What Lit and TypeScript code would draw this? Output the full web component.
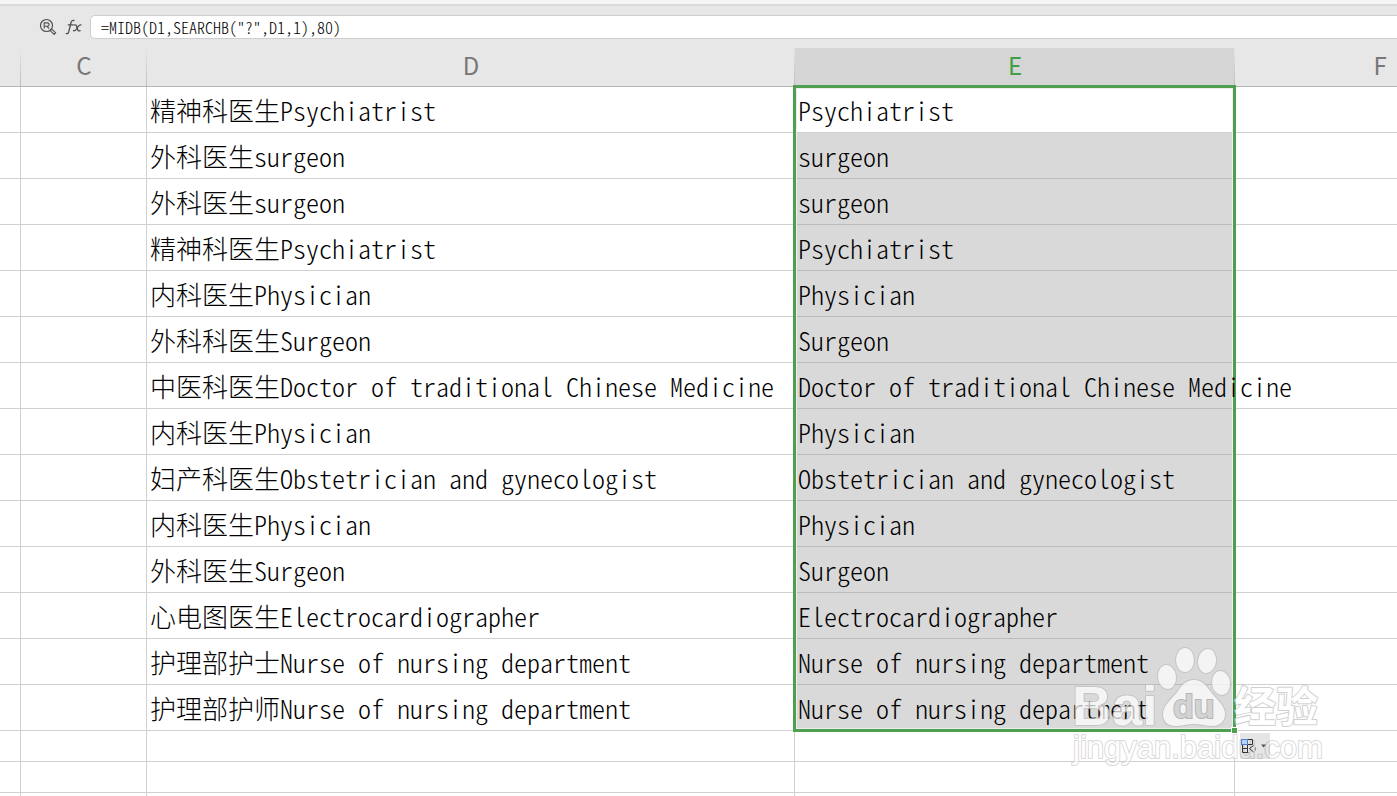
import { LitElement, html, css } from "lit";
import { customElement, state } from "lit/decorators.js";

interface Row {
  title: string;
  result: string;
}

const ROWS: Row[] = [
  { title: "精神科医生", result: "Psychiatrist" },
  { title: "外科医生", result: "surgeon" },
  { title: "外科医生", result: "surgeon" },
  { title: "精神科医生", result: "Psychiatrist" },
  { title: "内科医生", result: "Physician" },
  { title: "外科科医生", result: "Surgeon" },
  { title: "中医科医生", result: "Doctor of traditional Chinese Medicine" },
  { title: "内科医生", result: "Physician" },
  { title: "妇产科医生", result: "Obstetrician and gynecologist" },
  { title: "内科医生", result: "Physician" },
  { title: "外科医生", result: "Surgeon" },
  { title: "心电图医生", result: "Electrocardiographer" },
  { title: "护理部护士", result: "Nurse of nursing department" },
  { title: "护理部护师", result: "Nurse of nursing department" },
];

@customElement("formula-bar")
export class FormulaBar extends LitElement {
  @state() private formula = '=MIDB(D1,SEARCHB("?",D1,1),80)';

  static styles = css`
    :host {
      display: block;
      background: #e7e7e7;
    }
    .strip {
      height: 4px;
      background: #f5f5f5;
      border-bottom: 2px solid #dadada;
    }
    .bar {
      display: flex;
      align-items: center;
      height: 42px;
      padding-left: 38px;
      gap: 6px;
    }
    .tool {
      display: flex;
      align-items: center;
      justify-content: center;
      width: 20px;
      height: 24px;
      padding: 0;
      border: 0;
      background: none;
      color: #505050;
    }
    .box {
      flex: 1;
      display: flex;
      height: 24px;
      box-sizing: border-box;
      border: 1px solid #cfcfcf;
      border-right: 0;
      border-radius: 5px 0 0 5px;
      background: #fff;
      overflow: hidden;
    }
    .input {
      flex: 1;
      min-width: 0;
      border: 0;
      padding: 0 10px;
      outline: none;
      background: none;
      color: #000;
      font: 300 16px / 22px "Noto Sans CJK SC", sans-serif;
      font-feature-settings: "hwid";
    }
  `;

  render() {
    return html`
      <div class="strip"></div>
      <div class="bar">
        <button class="tool" aria-label="Find">
          <svg width="18" height="18" viewBox="0 0 18 18" fill="none" stroke="currentColor">
            <circle cx="7.5" cy="7.5" r="6" stroke-width="1.2" />
            <path d="M5.2 10.6V4.9H8.4a1.7 1.7 0 0 1 0 3.4H5.2M8 8.3l2.2 2.4" stroke-width="1.1" />
            <path d="M11.2 12.6l1.5-1.5 3.9 3.6-1.5 1.7z" stroke-width="1.1" />
          </svg>
        </button>
        <button class="tool" aria-label="Insert function">
          <svg width="18" height="18" viewBox="0 0 18 18" fill="none" stroke="currentColor" stroke-width="1.3" stroke-linecap="round">
            <path d="M1.2 15.6c1.6.5 2.3-.7 2.7-2.4L5.9 5c.4-1.9 1.3-2.9 3-2.5" />
            <path d="M3.3 6.8h5" />
            <path d="M9.3 7c1.3-.5 2 .2 2.4 1.5l.9 3c.4 1.3 1.2 1.8 2.5 1.1" />
            <path d="M16 6.9c-1.3-.2-1.9.4-2.8 1.6l-2.1 3c-.8 1.1-1.5 1.5-2.6 1.2" />
          </svg>
        </button>
        <div class="box">
          <input class="input" aria-label="Formula" spellcheck="false" .value=${this.formula} />
        </div>
      </div>
    `;
  }
}

@customElement("site-watermark")
export class SiteWatermark extends LitElement {
  static styles = css`
    :host {
      display: block;
      pointer-events: none;
    }
    .mark {
      display: block;
      opacity: 0.72;
    }
    .shape {
      fill: #fff;
      stroke: #bebebe;
      stroke-width: 2px;
      paint-order: stroke;
      stroke-linejoin: round;
    }
    .latin {
      font: 700 55px "Liberation Sans", Arial, sans-serif;
    }
    .du {
      font: 700 34px "Liberation Sans", Arial, sans-serif;
      fill: #d2d2d2;
      stroke: #a8a8a8;
      stroke-width: 2px;
      paint-order: stroke;
    }
    .han {
      font: 700 42px "Noto Sans CJK SC", sans-serif;
    }
    .url {
      font: 400 31px "Liberation Sans", Arial, sans-serif;
      stroke: #cccccc;
    }
  `;

  render() {
    return html`
      <svg class="mark" width="260" height="130" viewBox="0 0 260 130">
        <text class="shape latin" x="1" y="80">Bai</text>
        <ellipse class="shape" cx="96" cy="32" rx="9" ry="12" transform="rotate(-6 96 32)" />
        <ellipse class="shape" cx="114" cy="15" rx="9" ry="12" />
        <ellipse class="shape" cx="136" cy="16" rx="9" ry="12" transform="rotate(8 136 16)" />
        <ellipse class="shape" cx="150" cy="38" rx="9" ry="12" transform="rotate(-6 150 38)" />
        <path
          class="shape"
          d="M123 35c8 0 12 5 16 11 5 7 15 14 15 23 0 8-6 12-12 12-7 0-12-2-19-2s-12 2-18 2c-8 0-13-4-13-12 0-9 10-16 15-23 4-6 8-11 16-11z"
        />
        <text class="du" x="102" y="73">du</text>
        <text class="shape han" x="163" y="77">经验</text>
        <text class="shape url" x="2" y="113">jingyan.baidu.com</text>
      </svg>
    `;
  }
}

@customElement("sheet-grid")
export class SheetGrid extends LitElement {
  static styles = css`
    :host {
      display: block;
      position: relative;
      overflow: hidden;
      background: #fff;
    }
    .sheet {
      width: 1525px;
      table-layout: fixed;
      border-collapse: separate;
      border-spacing: 0;
    }
    .col-b {
      width: 21px;
    }
    .col-c {
      width: 126px;
    }
    .col-d {
      width: 648px;
    }
    .col-e {
      width: 440px;
    }
    .head {
      box-sizing: border-box;
      height: 39px;
      padding: 0 0 4px;
      border-bottom: 1px solid #b4b4b4;
      background: linear-gradient(to bottom, #e7e7e7, #bcbcbc) right / 1px 100% no-repeat #e7e7e7;
      color: #777;
      font: 400 24px / 34px "Noto Sans CJK SC", sans-serif;
      text-align: center;
    }
    .head.active {
      background-color: #d5d5d5;
      color: #3f9f42;
    }
    .cell {
      box-sizing: border-box;
      height: 46px;
      padding: 2px 3px 2px;
      border-right: 1px solid #d0d0d0;
      border-bottom: 1px solid #d0d0d0;
      color: #000;
      font: 300 26px / 40px "Noto Sans CJK SC", sans-serif;
      font-feature-settings: "hwid";
      white-space: nowrap;
    }
    .cell.selected {
      background: #d9d9d9;
      border-bottom-color: #bcbcbc;
    }
    .cell.short {
      height: 31px;
      padding: 0;
    }
    /* Keeps long values readable where they cross the selection frame. */
    .value {
      position: relative;
      z-index: 1;
    }
    .selection {
      position: absolute;
      left: 793px;
      top: 37px;
      width: 443px;
      height: 647px;
      box-sizing: border-box;
      border: 3px solid #4e9f50;
      box-shadow: inset 0 0 0 1px #ededed;
      pointer-events: none;
    }
    .handle {
      position: absolute;
      right: -5px;
      bottom: -5px;
      width: 5px;
      height: 5px;
      border: 1px solid #fff;
      background: #4e9f50;
    }
    .watermark {
      position: absolute;
      z-index: 2;
      left: 1071px;
      top: 597px;
    }
    .options {
      position: absolute;
      z-index: 3;
      left: 1240px;
      top: 685px;
      display: flex;
      align-items: center;
      justify-content: center;
      width: 30px;
      height: 26px;
      padding: 0;
      border: 0;
      background: rgba(0, 0, 0, 0.1);
    }
  `;

  private blankRow() {
    return html`<tr>
      ${[0, 1, 2, 3, 4].map(() => html`<td class="cell short"></td>`)}
    </tr>`;
  }

  render() {
    return html`
      <table class="sheet">
        <colgroup>
          <col class="col-b" />
          <col class="col-c" />
          <col class="col-d" />
          <col class="col-e" />
          <col />
        </colgroup>
        <thead>
          <tr>
            <th class="head"></th>
            <th class="head" scope="col">C</th>
            <th class="head" scope="col">D</th>
            <th class="head active" scope="col">E</th>
            <th class="head" scope="col">F</th>
          </tr>
        </thead>
        <tbody>
          ${ROWS.map(
            (row, i) => html`<tr>
              <td class="cell"></td>
              <td class="cell"></td>
              <td class="cell">${row.title}${row.result}</td>
              <td class="cell ${i > 0 ? "selected" : ""}"><span class="value">${row.result}</span></td>
              <td class="cell"></td>
            </tr>`
          )}
          ${this.blankRow()} ${this.blankRow()} ${this.blankRow()}
        </tbody>
      </table>
      <div class="selection"><div class="handle"></div></div>
      <site-watermark class="watermark"></site-watermark>
      <button class="options" aria-label="Fill options">
        <svg width="28" height="18" viewBox="0 0 28 18" fill="none" stroke="#333">
          <path d="M6.5 2.5h5v5h-5M1.5 7v8.500h6M1.500 11.500h5M6.500 6.500v9" />
          <rect x="0.5" y="2.5" width="6" height="5" fill="#b9d2f8" stroke="#4f7ccb" />
          <path d="M12.500 8.500l-4 3 4 3.500" />
          <path d="M14.500 10.500v3" stroke="#888" />
          <path d="M20 7.500h5l-2.500 3z" fill="#555" stroke="none" />
        </svg>
      </button>
    `;
  }
}

@customElement("app-root")
export class AppRoot extends LitElement {
  static styles = css`
    :host {
      display: flex;
      flex-direction: column;
      height: 100vh;
      overflow: hidden;
      background: #fff;
    }
    .grid {
      flex: 1;
      min-height: 0;
    }
  `;

  render() {
    return html`
      <formula-bar></formula-bar>
      <sheet-grid class="grid"></sheet-grid>
    `;
  }
}
